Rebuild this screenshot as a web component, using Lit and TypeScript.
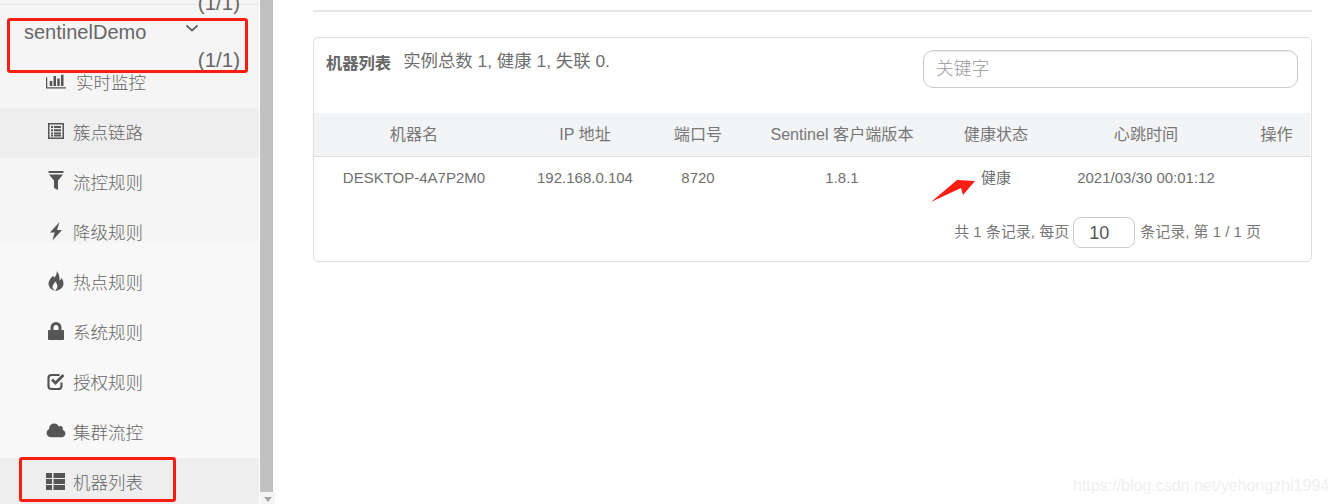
import { LitElement, html, css, svg } from "lit";
import { customElement } from "lit/decorators.js";

const FA = (d: string, w = 1792) => html`<svg class="ic" viewBox="0 0 ${w} 1792" style="width:${w === 2048 ? 20 : 18}px;height:18px"><path d=${d} fill="#555"/></svg>`;
const raw = (inner: unknown) => html`<svg class="ic" viewBox="0 0 20 20">${inner}</svg>`;

const icons = {
  bar: FA("M640 896v512h-256v-512h256zm384-512v1024h-256v-1024h256zm1024 1152v128h-2048v-1152h128v1024h1920zm-640-896v768h-256v-768h256zm384-384v1152h-256v-1152h256z", 2048),
  list: raw(svg`<path fill-rule="evenodd" fill="#555" d="M2 2h16v16H2zM3.500 3.500v13h13v-13zM5 5h2v2H5zm3 0h7v2H8zM5 8.200h2v2H5zm3 0h7v2H8zM5 11.400h2v2H5zm3 0h7v2H8zM5 14h2v1.400H5zm3 0h7v1.400H8z"/>`),
  filter: raw(svg`<path fill="#555" d="M2.500 0h15v2h-15zM3 3.500h14l-5 6V19l-4-2v-7.500z"/>`),
  bolt: raw(svg`<path fill="#555" d="M13.500 1 4 11.500h4.700L6.500 19.500 16 9h-5z"/>`),
  fire: raw(svg`<path fill="#555" d="M10.500 0c1 3-1 5-2.400 6.800C7.500 6.200 7.400 5.400 7.400 4.400 5 6.600 2.500 9.400 2.500 12.600 2.500 16.500 6 19.300 8.800 19.800 7 18.300 6 16.800 6.700 14.800c.5-1.400 1.800-2.500 2.400-4.300 1.500 1.500 3 4 2 6.300-.4 1.100-1.200 2.200-2 3 4-.3 8.400-2.800 8.400-7.600 0-2.200-1-4-2.200-5.200-.3 1.100-.8 1.800-1.800 2.500C13.800 5.500 13 2.500 10.500 0z"/>`),
  lock: raw(svg`<path fill="#555" fill-rule="evenodd" d="M4.500 9V6.500a5.500 5.500 0 0 1 11 0V9H17a1 1 0 0 1 1 1v8a1 1 0 0 1-1 1H3a1 1 0 0 1-1-1v-8a1 1 0 0 1 1-1zM7.500 9h5V6.500a2.500 2.500 0 0 0-5 0z"/>`),
  check: raw(svg`<path fill="none" stroke="#555" stroke-width="2.200" d="M15.500 11.500V15a3 3 0 0 1-3 3H5.500a3 3 0 0 1-3-3V7a3 3 0 0 1 3-3h8"/><path fill="none" stroke="#555" stroke-width="2.800" d="M6 8.500l3.500 3.500L17.500 4"/>`),
  cloud: FA("M1984 1152q0 159-112.500 271.500t-271.500 112.500h-1088q-185 0-316.500-131.500t-131.500-316.500q0-132 71-241.500t187-163.500q-2-28-2-43 0-212 150-362t362-150q158 0 286.500 88t187.500 230q70-62 166-62 106 0 181 75t75 181q0 75-41 138 129 30 213 134.500t84 239.500z", 2048),
  th: raw(svg`<path fill="#555" d="M0 2h6v5H0zm7.500 0H19v5H7.500zM0 8h6v5H0zm7.500 0H19v5H7.500zM0 14h6v5H0zm7.500 0H19v5H7.500z"/>`),
};

const menu: [keyof typeof icons, string, string][] = [
  ["bar", "实时监控", "first"],
  ["list", "簇点链路", "shade"],
  ["filter", "流控规则", ""],
  ["bolt", "降级规则", ""],
  ["fire", "热点规则", ""],
  ["lock", "系统规则", ""],
  ["check", "授权规则", ""],
  ["cloud", "集群流控", ""],
  ["th", "机器列表", "shade"],
];

@customElement("app-root")
export class AppRoot extends LitElement {
  static styles = css`
    :host {
      display: flex;
      position: relative;
      width: 1337px;
      height: 504px;
      overflow: hidden;
      background: #fff;
      color: #777;
      font-family: "Liberation Sans", "Noto Sans CJK SC", sans-serif;
    }
    .sidebar {
      width: 259px;
      flex: none;
      padding-top: 4px;
      box-sizing: border-box;
      background: linear-gradient(#f5f5f5 243px, #f8f8f8 243px);
      color: #666;
    }
    .app-head {
      border-top: 1px solid #e7e7e7;
      height: 65px;
      margin-bottom: -12px;
      display: flex;
      flex-direction: column;
    }
    .count {
      height: 20px;
      line-height: 20px;
      text-align: right;
      padding-right: 19px;
      color: #666;
      font-size: 20.500px;
    }
    .count.prev { margin-top: -12px; }
    .name-row {
      height: 38px;
      display: flex;
      align-items: center;
      justify-content: space-between;
      padding: 2px 60px 0 24px;
      box-sizing: border-box;
      font-size: 20px;
    }
    .name-row svg { width: 14px; height: 8px; margin: -10px 0 0; }
    .row {
      height: 50px;
      display: flex;
      align-items: center;
      padding-left: 46px;
      font-size: 17.500px;
      font-weight: 300;
    }
    .row.shade { background: #eee; }
    .label { margin-top: -4px; }
    .slot { width: 20px; height: 20px; display: flex; align-items: center; margin: -5px 7px 0 0; }
    .row.first .slot { margin-right: 10px; }
    .ic { width: 20px; height: 20px; display: block; }
    .scroll {
      width: 16px;
      flex: none;
      margin-left: 1px;
      display: flex;
      flex-direction: column;
    }
    .thumb { width: 13px; height: 492px; background: #c1c1c1; flex: none; }
    .btn { width: 15px; height: 12px; background: #f4f4f4; display: flex; justify-content: center; padding-top: 5px; box-sizing: border-box; }
    .btn i { width: 0; height: 0; border-left: 4px solid transparent; border-right: 4px solid transparent; border-top: 5px solid #a3a3a3; }
    .main { flex: 1; padding: 10px 25px 0 37px; min-width: 0; }
    .rule { height: 2px; background: #e7e7e7; margin-bottom: 25px; }
    .card { height: 225px; box-sizing: border-box; border: 1px solid #ddd; border-radius: 5px; }
    .head { height: 75px; display: flex; padding: 12px 13px 0 12px; box-sizing: border-box; }
    .title { font-size: 16.300px; font-weight: 700; color: #666; margin-top: 2px; line-height: 22px; }
    .summary { font-size: 17.400px; margin-left: 12px; line-height: 22px; color: #6f6f6f; flex: 1; }
    .search {
      width: 375px;
      height: 38px;
      box-sizing: border-box;
      border: 1px solid #ccc;
      border-radius: 10px;
      box-shadow: inset 0 1px 1px rgba(0, 0, 0, .075);
      padding-left: 12px;
      line-height: 37px;
      font-size: 17.700px;
      color: #999;
      font-weight: 300;
    }
    .grid {
      display: grid;
      grid-template-columns: 200px 142px 84px 204px 104px 196px 65px;
      text-align: center;
      align-items: center;
    }
    .thead { height: 44px; background: #f3f4f6; border-bottom: 1px solid #ddd; box-sizing: border-box; font-size: 16.100px; color: #777; margin-right: 1px; padding-bottom: 4px; }
    .tbody { height: 42px; font-size: 15px; color: #6f6f6f; padding-bottom: 2px; box-sizing: border-box; }
    .cjk { margin-top: -1px; }
    .pager { display: flex; align-items: center; justify-content: flex-end; padding-right: 50px; font-size: 15px; height: 32px; margin-top: 16px; color: #777; }
    .pager span { margin-top: -2px; }
    .size {
      width: 62px;
      height: 31px;
      box-sizing: border-box;
      border: 1px solid #ccc;
      border-radius: 8px;
      margin: 3px 5px 0 4px;
      line-height: 30px;
      font-size: 18px;
      padding-left: 15px;
      color: #555;
    }
    .box { position: absolute; border: 3px solid #fa1e12; border-radius: 3px; box-sizing: border-box; }
    .box.a { left: 7px; top: 18px; width: 241px; height: 55px; }
    .box.b { left: 19px; top: 457px; width: 157px; height: 45px; }
    .arrow { position: absolute; left: 930px; top: 178px; width: 46px; height: 25px; }
    .mark { position: absolute; left: 1073px; top: 476px; font-size: 16px; color: #efefef; line-height: 20px; white-space: nowrap; }
  `;

  render() {
    return html`
      <div class="sidebar">
        <div class="app-head">
          <div class="count prev">(1/1)</div>
          <div class="name-row">
            <span>sentinelDemo</span>
            <svg viewBox="0 0 14 8"><path d="M1.500 1.500 7 6.500l5.500-5" fill="none" stroke="#666" stroke-width="1.800"/></svg>
          </div>
          <div class="count">(1/1)</div>
        </div>
        ${menu.map(([ic, label, cls]) => html`
          <div class="row ${cls}"><span class="slot">${icons[ic]}</span><span class="label">${label}</span></div>
        `)}
      </div>
      <div class="scroll">
        <div class="thumb"></div>
        <div class="btn"><i></i></div>
      </div>
      <div class="main">
        <div class="rule"></div>
        <div class="card">
          <div class="head">
            <span class="title">机器列表</span>
            <span class="summary">实例总数 1, 健康 1, 失联 0.</span>
            <div class="search">关键字</div>
          </div>
          <div class="grid thead">
            <span>机器名</span><span>IP 地址</span><span>端口号</span><span>Sentinel 客户端版本</span><span>健康状态</span><span>心跳时间</span><span>操作</span>
          </div>
          <div class="grid tbody">
            <span>DESKTOP-4A7P2M0</span><span>192.168.0.104</span><span>8720</span><span>1.8.1</span><span class="cjk">健康</span><span>2021/03/30 00:01:12</span><span></span>
          </div>
          <div class="pager">
            <span>共 1 条记录, 每页</span>
            <div class="size">10</div>
            <span>条记录, 第 1 / 1 页</span>
          </div>
        </div>
      </div>
      <div class="box a"></div>
      <div class="box b"></div>
      <svg class="arrow" viewBox="0 0 46 25"><path fill="#fa1e12" d="M1 24 27 2 45 3 33 17 31 10z"/></svg>
      <div class="mark">https://blog.csdn.net/yehongzhi1994</div>
    `;
  }
}
